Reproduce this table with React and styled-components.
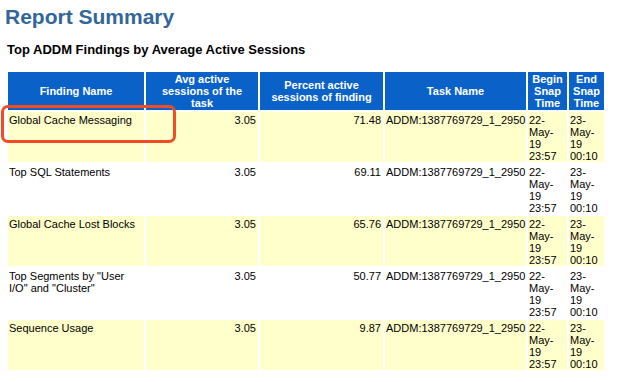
import React from "react";
import styled, { createGlobalStyle } from "styled-components";

const GlobalStyle = createGlobalStyle`
  html, body {
    margin: 0;
    padding: 0;
    background: #ffffff;
  }
  body {
    font-family: "Liberation Sans", Arial, Helvetica, sans-serif;
    color: #000;
  }
`;

const Page = styled.div`
  position: relative;
  width: 627px;
  height: 382px;
  overflow: hidden;
  background: #fff;
`;

const Title = styled.h1`
  margin: 5px 0 0 5px;
  font: bold 21px/24px "Liberation Sans", Arial, sans-serif;
  color: #336699;
`;

const Subtitle = styled.h2`
  margin: 13px 0 0 7px;
  font: bold 13px/16px "Liberation Sans", Arial, sans-serif;
  color: #000;
`;

const Table = styled.table`
  margin: 12px 0 0 6px;
  width: 600px;
  table-layout: fixed;
  border-collapse: separate;
  border-spacing: 2px;
  font-family: "Liberation Sans", Arial, sans-serif;
  font-size: 11px;
  line-height: 12px;
`;

const HeadCell = styled.th`
  box-sizing: border-box;
  height: 38px;
  padding: 1px 4px 1px;
  background: #0a62c8;
  color: #fff;
  font-weight: bold;
  text-align: center;
  vertical-align: middle;
`;

const Cell = styled.td`
  box-sizing: border-box;
  height: 50px;
  padding: 2px 2px 0 1px;
  background: ${(p) => (p.$shaded ? "#ffffcc" : "#ffffff")};
  color: #000;
  text-align: ${(p) => (p.$num ? "right" : "left")};
  vertical-align: top;
`;

const Highlight = styled.div`
  position: absolute;
  left: 1px;
  top: 105px;
  width: 175px;
  height: 38px;
  box-sizing: border-box;
  border: 3px solid #f04b23;
  border-radius: 7px;
  pointer-events: none;
`;

const columns = [
  { label: "Finding Name", width: 136 },
  { label: "Avg active sessions of the task", width: 112 },
  { label: "Percent active sessions of finding", width: 123 },
  { label: "Task Name", width: 141 },
  { label: "Begin Snap Time", width: 39 },
  { label: "End Snap Time", width: 35 },
];

const rows = [
  ["Global Cache Messaging", "3.05", "71.48"],
  ["Top SQL Statements", "3.05", "69.11"],
  ["Global Cache Lost Blocks", "3.05", "65.76"],
  ['Top Segments by "User I/O" and "Cluster"', "3.05", "50.77"],
  ["Sequence Usage", "3.05", "9.87"],
];

const TASK = "ADDM:1387769729_1_2950";
const BEGIN = "22-May-19 23:57";
const END = "23-May-19 00:10";

export default function App() {
  return (
    <Page>
      <GlobalStyle />
      <Title>Report Summary</Title>
      <Subtitle>Top ADDM Findings by Average Active Sessions</Subtitle>
      <Table>
        <colgroup>
          {columns.map((c) => (
            <col key={c.label} style={{ width: c.width }} />
          ))}
        </colgroup>
        <thead>
          <tr>
            {columns.map((c) => (
              <HeadCell key={c.label}>{c.label}</HeadCell>
            ))}
          </tr>
        </thead>
        <tbody>
          {rows.map(([name, avg, pct], i) => {
            const shaded = i % 2 === 0;
            return (
              <tr key={name}>
                <Cell $shaded={shaded}>{name}</Cell>
                <Cell $shaded={shaded} $num>{avg}</Cell>
                <Cell $shaded={shaded} $num>{pct}</Cell>
                <Cell $shaded={shaded}>{TASK}</Cell>
                <Cell $shaded={shaded}>{BEGIN}</Cell>
                <Cell $shaded={shaded}>{END}</Cell>
              </tr>
            );
          })}
        </tbody>
      </Table>
      <Highlight />
    </Page>
  );
}
